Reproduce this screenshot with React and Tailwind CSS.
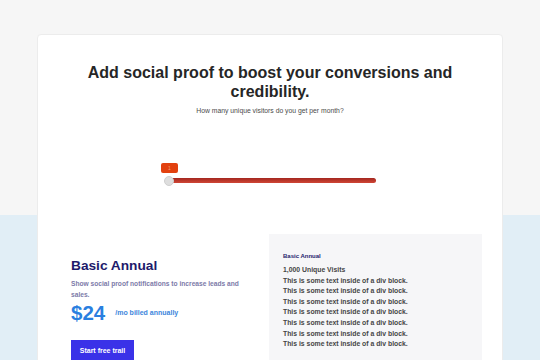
const features = Array.from({ length: 7 }, () => 'This is some text inside of a div block.');

const Slider = () => {
    return (
        <div className="mx-auto mt-[47px] w-[212px]">
            <div className="ml-[-3px] flex h-[10px] w-[17px] items-center justify-center rounded-[2px] bg-[#e2410f] text-[5px] leading-none text-[#f39a72]">
                1
            </div>
            <div className="relative mt-[3px] h-[10px]">
                <div className="absolute left-[2px] right-0 top-[2px] h-[5px] rounded-full bg-[linear-gradient(#a3271f,#d04636)]" />
                <div className="absolute left-0 top-0 h-[10px] w-[10px] rounded-full border border-[#cfcfcf] bg-[#dedede]" />
            </div>
        </div>
    );
};

const App = () => {
    return (
        <div className="min-h-screen bg-[linear-gradient(to_bottom,#f6f6f6_215px,#e1eef6_215px)] pt-[34px] font-['Liberation_Sans',Arial,sans-serif]">
            <div className="mx-[37px] min-h-[400px] rounded-[4px] border border-[#ececec] bg-white pb-[30px]">
                <div className="flex flex-col items-center pt-[28px]">
                    <h1 className="max-w-[380px] text-center text-[16px] font-bold leading-[19px] text-[#262626]">
                        Add social proof to boost your conversions and credibility.
                    </h1>
                    <p className="mt-[5px] text-[6.8px] leading-[10px] text-[#4a4a4a]">
                        How many unique visitors do you get per month?
                    </p>
                </div>

                <Slider />

                <div className="mt-[48px] flex pl-[33px] pr-[20px]">
                    <div className="w-[178px] pt-[23px]">
                        <h2 className="text-[13.7px] font-semibold leading-[17px] text-[#1e1a6b]">
                            Basic Annual
                        </h2>
                        <p className="mt-[4px] text-[6.65px] font-bold leading-[11px] text-[#7c7aa8]">
                            Show social proof notifications to increase leads and sales.
                        </p>
                        <div className="mt-[1px] flex items-center gap-[10px]">
                            <span className="text-[20.5px] font-bold leading-[24px] text-[#2a7fe0]">$24</span>
                            <span className="text-[7px] font-bold text-[#3d86dc]">/mo billed annually</span>
                        </div>
                        <button className="mt-[15px] flex h-[22px] w-[63px] items-center justify-center bg-[#3a32e8] text-[7px] font-bold text-white">
                            Start free trail
                        </button>
                    </div>
                    <div className="ml-auto w-[213px] bg-[#f6f6f8] px-[14px] pb-[14px] pt-[18px]">
                        <h3 className="text-[6px] font-bold leading-[8px] text-[#27246e]">Basic Annual</h3>
                        <div className="mt-[5px] text-[6.85px] font-bold leading-[10.6px] text-[#454545]">
                            <p>1,000 Unique Visits</p>
                            {features.map((text, i) => (
                                <p key={i}>{text}</p>
                            ))}
                        </div>
                    </div>
                </div>
            </div>
        </div>
    );
};

export default App;
